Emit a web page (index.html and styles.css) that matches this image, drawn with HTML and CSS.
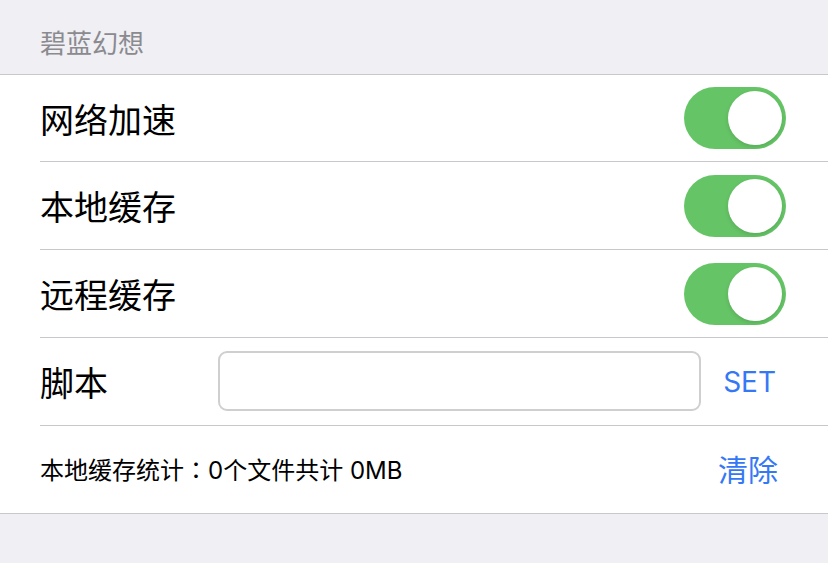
FILE: index.html
```html
<!DOCTYPE html>
<html lang="zh-CN">
<head>
<meta charset="utf-8">
<title>设置</title>
<link rel="stylesheet" href="styles.css">
</head>
<body>
<div class="page">
  <div class="section-header">碧蓝幻想</div>
  <div class="group">
    <div class="row row-first">
      <span class="label">网络加速</span>
      <span class="switch on"><span class="knob"></span></span>
    </div>
    <div class="row">
      <span class="label">本地缓存</span>
      <span class="switch on"><span class="knob"></span></span>
    </div>
    <div class="row">
      <span class="label">远程缓存</span>
      <span class="switch on"><span class="knob"></span></span>
    </div>
    <div class="row row-script">
      <span class="label label-fixed">脚本</span>
      <input class="text-input" type="text">
      <span class="link link-set">SET</span>
    </div>
    <div class="row row-last">
      <span class="small-text">本地缓存统计<span class="fw-colon" lang="ja">：</span>0个文件共计 0MB</span>
      <span class="link link-clear">清除</span>
    </div>
  </div>
</div>
</body>
</html>
```

FILE: styles.css
```css
html, body {
  margin: 0;
  padding: 0;
}
body {
  background: #efeff4;
  font-family: Inter, "Noto Sans CJK SC", "Noto Sans", sans-serif;
  color: #000;
}
.page {
  width: 828px;
  height: 563px;
  overflow: hidden;
}
.section-header {
  box-sizing: border-box;
  height: 74px;
  padding: 30px 0 0 40px;
  font-size: 26px;
  line-height: 28px;
  color: #8a8a8f;
}
.group {
  background: #fff;
  border-top: 1px solid #c8c7cc;
  border-bottom: 1px solid #c8c7cc;
}
.row {
  box-sizing: border-box;
  height: 88px;
  margin-left: 40px;
  border-bottom: 1px solid #c8c7cc;
  display: flex;
  align-items: center;
  justify-content: space-between;
  padding-right: 42px;
}
.row-first {
  height: 87px;
}
.row-last {
  border-bottom: none;
  height: 87px;
  padding-right: 50px;
}
.label {
  font-size: 34px;
  line-height: 40px;
  padding-top: 5px;
}
.switch {
  position: relative;
  box-sizing: border-box;
  width: 102px;
  height: 62px;
  border-radius: 31px;
  background: #65c466;
}
.knob {
  position: absolute;
  top: 4px;
  right: 4px;
  width: 54px;
  height: 54px;
  border-radius: 50%;
  background: #fff;
  box-shadow: 0 2px 4px rgba(0,0,0,0.12);
}
.row-script {
  justify-content: flex-start;
  padding-right: 52px;
}
.label-fixed {
  width: 178px;
  flex: none;
}
.text-input {
  box-sizing: border-box;
  flex: 1;
  height: 60px;
  margin: 0 0 2px 0;
  border: 2px solid #cfcfcf;
  border-radius: 9px;
  background: #fff;
  outline: none;
  font-size: 24px;
}
.link {
  color: #3478f6;
}
.link-set {
  margin-left: 22px;
  font-size: 28px;
  line-height: 32px;
}
.small-text {
  font-size: 24px;
  line-height: 30px;
}
.fw-colon {
  font-family: "Noto Sans CJK JP", sans-serif;
}
.link-clear {
  font-size: 30px;
  line-height: 36px;
}
```
